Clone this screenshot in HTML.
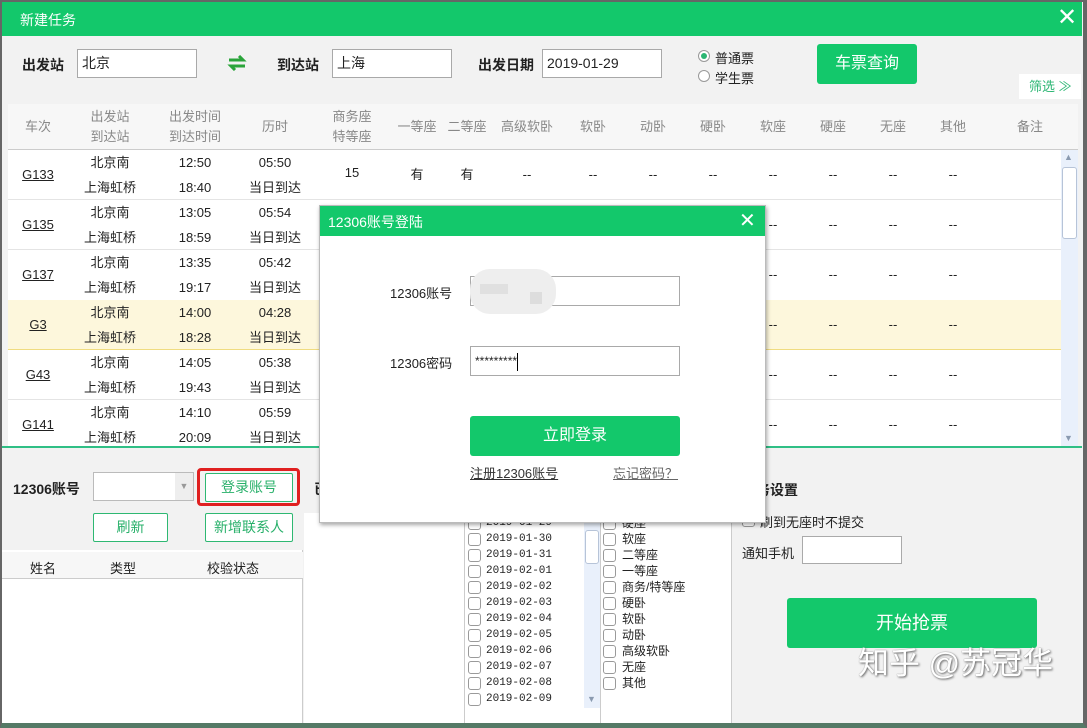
<!DOCTYPE html>
<html><head><meta charset="utf-8"><style>
*{margin:0;padding:0;box-sizing:border-box}
body{width:1087px;height:728px;overflow:hidden;background:#fff;font-family:"Liberation Sans","Noto Sans CJK SC",sans-serif;font-size:13px;color:#222;position:relative}
.a{position:absolute}
.g{background:#13c86b}
.inp{position:absolute;background:#fff;border:1px solid #a9a9a9;font-size:14px;padding-left:4px;line-height:26px}
.hd{position:absolute;color:#888;font-size:13px;text-align:center;line-height:20px}
.c{position:absolute;text-align:center;font-size:13px;line-height:25px}
.btn{position:absolute;border:1px solid #2eb872;background:#fff;color:#28b06a;text-align:center;font-size:14px;border-radius:2px}
.cb{position:absolute;width:13px;height:13px;border:1px solid #9a9a9a;border-radius:3px;background:#fff}
.lt{position:absolute;font-size:11px;line-height:16px;color:#222}
.dt{font-family:"Liberation Mono",monospace;font-size:11px}
</style></head><body>
<div class="a" style="left:0;top:0;width:1087px;height:728px;border:2px solid #666;border-right-width:4px;border-bottom:5px solid #557a66;background:#f2f2f2"></div>
<div class="a g" style="left:2px;top:2px;width:1080px;height:34px"></div>
<div class="a" style="left:20px;top:10px;color:#fff;font-size:14px">新建任务</div>
<div class="a" style="left:1057px;top:4px;color:#fff;font-size:24px;line-height:28px">✕</div>

<div class="a" style="left:22px;top:55px;font-weight:bold;font-size:14px">出发站</div>
<div class="inp" style="left:77px;top:49px;width:120px;height:29px">北京</div>
<svg class="a" style="left:227px;top:55px" width="20" height="16" viewBox="0 0 20 16"><path d="M2 5h14l-4-4M18 11H4l4 4" stroke="#2aa43a" stroke-width="3" fill="none"/></svg>
<div class="a" style="left:277px;top:55px;font-weight:bold;font-size:14px">到达站</div>
<div class="inp" style="left:332px;top:49px;width:120px;height:29px">上海</div>
<div class="a" style="left:478px;top:55px;font-weight:bold;font-size:14px">出发日期</div>
<div class="inp" style="left:542px;top:49px;width:120px;height:29px">2019-01-29</div>
<div class="a" style="left:698px;top:50px;width:12px;height:12px;border:1px solid #999;border-radius:50%;background:#fff"><div style="margin:2px;width:6px;height:6px;border-radius:50%;background:#2bb673"></div></div>
<div class="a" style="left:715px;top:48px;font-size:13px">普通票</div>
<div class="a" style="left:698px;top:70px;width:12px;height:12px;border:1px solid #999;border-radius:50%;background:#fff"></div>
<div class="a" style="left:715px;top:68px;font-size:13px">学生票</div>
<div class="a g" style="left:817px;top:44px;width:100px;height:40px;border-radius:3px;color:#fff;font-size:16px;text-align:center;line-height:40px">车票查询</div>
<div class="a" style="left:1019px;top:74px;width:62px;height:25px;background:#fff;color:#2bb673;font-size:13px;line-height:25px;padding-left:10px">筛选 ≫</div>

<div class="a" style="left:8px;top:104px;width:1070px;height:46px;background:#f7f7f7;border-bottom:1px solid #ccc"></div>
<div class="hd" style="left:8px;top:117px;width:60px">车次</div>
<div class="hd" style="left:80px;top:107px;width:60px">出发站<br>到达站</div>
<div class="hd" style="left:160px;top:107px;width:70px">出发时间<br>到达时间</div>
<div class="hd" style="left:245px;top:117px;width:60px">历时</div>
<div class="hd" style="left:322px;top:107px;width:60px">商务座<br>特等座</div>
<div class="hd" style="left:392px;top:117px;width:50px">一等座</div>
<div class="hd" style="left:442px;top:117px;width:50px">二等座</div>
<div class="hd" style="left:497px;top:117px;width:60px">高级软卧</div>
<div class="hd" style="left:563px;top:117px;width:60px">软卧</div>
<div class="hd" style="left:623px;top:117px;width:60px">动卧</div>
<div class="hd" style="left:683px;top:117px;width:60px">硬卧</div>
<div class="hd" style="left:743px;top:117px;width:60px">软座</div>
<div class="hd" style="left:803px;top:117px;width:60px">硬座</div>
<div class="hd" style="left:863px;top:117px;width:60px">无座</div>
<div class="hd" style="left:923px;top:117px;width:60px">其他</div>
<div class="hd" style="left:1000px;top:117px;width:60px">备注</div>

<div class="a" style="left:8px;top:150px;width:1053px;height:298px;background:#fff"></div>
<div class="a" style="left:8px;top:300px;width:1053px;height:50px;background:#fdf7dc;border-bottom:1px solid #f0dc80"></div>
<div class="a" style="left:8px;top:199px;width:1053px;height:1px;background:#e4e4e4"></div>
<div class="a" style="left:8px;top:249px;width:1053px;height:1px;background:#e4e4e4"></div>
<div class="a" style="left:8px;top:399px;width:1053px;height:1px;background:#e4e4e4"></div>
<div class="c" style="left:8px;top:162px;width:60px;text-decoration:underline">G133</div>
<div class="c" style="left:80px;top:150px;width:60px">北京南<br>上海虹桥</div>
<div class="c" style="left:160px;top:150px;width:70px">12:50<br>18:40</div>
<div class="c" style="left:245px;top:150px;width:60px">05:50<br>当日到达</div>
<div class="c" style="left:322px;top:160px;width:60px">15</div>
<div class="c" style="left:392px;top:162px;width:50px">有</div>
<div class="c" style="left:442px;top:162px;width:50px">有</div>
<div class="c" style="left:497px;top:162px;width:60px">--</div>
<div class="c" style="left:563px;top:162px;width:60px">--</div>
<div class="c" style="left:623px;top:162px;width:60px">--</div>
<div class="c" style="left:683px;top:162px;width:60px">--</div>
<div class="c" style="left:743px;top:162px;width:60px">--</div>
<div class="c" style="left:803px;top:162px;width:60px">--</div>
<div class="c" style="left:863px;top:162px;width:60px">--</div>
<div class="c" style="left:923px;top:162px;width:60px">--</div>

<div class="c" style="left:8px;top:212px;width:60px;text-decoration:underline">G135</div>
<div class="c" style="left:80px;top:200px;width:60px">北京南<br>上海虹桥</div>
<div class="c" style="left:160px;top:200px;width:70px">13:05<br>18:59</div>
<div class="c" style="left:245px;top:200px;width:60px">05:54<br>当日到达</div>
<div class="c" style="left:8px;top:262px;width:60px;text-decoration:underline">G137</div>
<div class="c" style="left:80px;top:250px;width:60px">北京南<br>上海虹桥</div>
<div class="c" style="left:160px;top:250px;width:70px">13:35<br>19:17</div>
<div class="c" style="left:245px;top:250px;width:60px">05:42<br>当日到达</div>
<div class="c" style="left:8px;top:312px;width:60px;text-decoration:underline">G3</div>
<div class="c" style="left:80px;top:300px;width:60px">北京南<br>上海虹桥</div>
<div class="c" style="left:160px;top:300px;width:70px">14:00<br>18:28</div>
<div class="c" style="left:245px;top:300px;width:60px">04:28<br>当日到达</div>
<div class="c" style="left:8px;top:362px;width:60px;text-decoration:underline">G43</div>
<div class="c" style="left:80px;top:350px;width:60px">北京南<br>上海虹桥</div>
<div class="c" style="left:160px;top:350px;width:70px">14:05<br>19:43</div>
<div class="c" style="left:245px;top:350px;width:60px">05:38<br>当日到达</div>
<div class="c" style="left:8px;top:412px;width:60px;text-decoration:underline">G141</div>
<div class="c" style="left:80px;top:400px;width:60px">北京南<br>上海虹桥</div>
<div class="c" style="left:160px;top:400px;width:70px">14:10<br>20:09</div>
<div class="c" style="left:245px;top:400px;width:60px">05:59<br>当日到达</div>
<div class="c" style="left:743px;top:212px;width:60px">--</div><div class="c" style="left:803px;top:212px;width:60px">--</div><div class="c" style="left:863px;top:212px;width:60px">--</div><div class="c" style="left:923px;top:212px;width:60px">--</div>
<div class="c" style="left:743px;top:262px;width:60px">--</div><div class="c" style="left:803px;top:262px;width:60px">--</div><div class="c" style="left:863px;top:262px;width:60px">--</div><div class="c" style="left:923px;top:262px;width:60px">--</div>
<div class="c" style="left:743px;top:312px;width:60px">--</div><div class="c" style="left:803px;top:312px;width:60px">--</div><div class="c" style="left:863px;top:312px;width:60px">--</div><div class="c" style="left:923px;top:312px;width:60px">--</div>
<div class="c" style="left:743px;top:362px;width:60px">--</div><div class="c" style="left:803px;top:362px;width:60px">--</div><div class="c" style="left:863px;top:362px;width:60px">--</div><div class="c" style="left:923px;top:362px;width:60px">--</div>
<div class="c" style="left:743px;top:412px;width:60px">--</div><div class="c" style="left:803px;top:412px;width:60px">--</div><div class="c" style="left:863px;top:412px;width:60px">--</div><div class="c" style="left:923px;top:412px;width:60px">--</div>
<div class="a" style="left:1061px;top:150px;width:17px;height:297px;background:#e9f0fb"></div>
<div class="a" style="left:1062px;top:167px;width:15px;height:72px;background:#fff;border:1px solid #b7c4d8;border-radius:3px"></div>
<div class="a" style="left:1064px;top:152px;color:#8a9ab0;font-size:9px">▲</div>
<div class="a" style="left:1064px;top:433px;color:#8a9ab0;font-size:9px">▼</div>
<div class="a" style="left:2px;top:446px;width:1080px;height:2px;background:#2fbf85"></div>

<div class="a" style="left:2px;top:550px;width:301px;height:173px;background:#fff;border-right:1px solid #ccc"></div>
<div class="a" style="left:2px;top:552px;width:301px;height:27px;background:#f7f7f7;border-bottom:1px solid #ccc"></div>
<div class="a" style="left:30px;top:558px">姓名</div>
<div class="a" style="left:110px;top:558px">类型</div>
<div class="a" style="left:207px;top:558px">校验状态</div>
<div class="a" style="left:13px;top:479px;font-weight:bold;font-size:14px">12306账号</div>
<div class="a" style="left:93px;top:472px;width:101px;height:29px;background:#fff;border:1px solid #bbb"></div>
<div class="a" style="left:175px;top:473px;width:18px;height:27px;background:#eee;color:#999;font-size:9px;text-align:center;line-height:27px">▼</div>
<div class="a" style="left:197px;top:468px;width:103px;height:38px;border:3px solid #e02020;border-radius:4px"></div>
<div class="btn" style="left:205px;top:473px;width:88px;height:29px;line-height:27px">登录账号</div>
<div class="btn" style="left:93px;top:513px;width:75px;height:29px;line-height:27px">刷新</div>
<div class="btn" style="left:205px;top:513px;width:88px;height:29px;line-height:27px">新增联系人</div>

<div class="a" style="left:304px;top:513px;width:428px;height:210px;background:#fff"></div>
<div class="a" style="left:464px;top:513px;width:1px;height:210px;background:#ccc"></div>
<div class="a" style="left:600px;top:513px;width:1px;height:210px;background:#ccc"></div>
<div class="a" style="left:731px;top:448px;width:1px;height:275px;background:#ccc"></div>
<div class="a" style="left:584px;top:515px;width:16px;height:193px;background:#e9f0fb"></div>
<div class="a" style="left:585px;top:530px;width:14px;height:34px;background:#fff;border:1px solid #b7c4d8;border-radius:3px"></div>
<div class="a" style="left:587px;top:694px;color:#8a9ab0;font-size:9px">▼</div>
<div class="cb" style="left:468px;top:517px"></div><div class="lt dt" style="left:486px;top:515px">2019-01-29</div>
<div class="cb" style="left:468px;top:533px"></div><div class="lt dt" style="left:486px;top:531px">2019-01-30</div>
<div class="cb" style="left:468px;top:549px"></div><div class="lt dt" style="left:486px;top:547px">2019-01-31</div>
<div class="cb" style="left:468px;top:565px"></div><div class="lt dt" style="left:486px;top:563px">2019-02-01</div>
<div class="cb" style="left:468px;top:581px"></div><div class="lt dt" style="left:486px;top:579px">2019-02-02</div>
<div class="cb" style="left:468px;top:597px"></div><div class="lt dt" style="left:486px;top:595px">2019-02-03</div>
<div class="cb" style="left:468px;top:613px"></div><div class="lt dt" style="left:486px;top:611px">2019-02-04</div>
<div class="cb" style="left:468px;top:629px"></div><div class="lt dt" style="left:486px;top:627px">2019-02-05</div>
<div class="cb" style="left:468px;top:645px"></div><div class="lt dt" style="left:486px;top:643px">2019-02-06</div>
<div class="cb" style="left:468px;top:661px"></div><div class="lt dt" style="left:486px;top:659px">2019-02-07</div>
<div class="cb" style="left:468px;top:677px"></div><div class="lt dt" style="left:486px;top:675px">2019-02-08</div>
<div class="cb" style="left:468px;top:693px"></div><div class="lt dt" style="left:486px;top:691px">2019-02-09</div>
<div class="cb" style="left:603px;top:517px"></div><div class="lt" style="left:622px;top:515px;font-size:12px">硬座</div>
<div class="cb" style="left:603px;top:533px"></div><div class="lt" style="left:622px;top:531px;font-size:12px">软座</div>
<div class="cb" style="left:603px;top:549px"></div><div class="lt" style="left:622px;top:547px;font-size:12px">二等座</div>
<div class="cb" style="left:603px;top:565px"></div><div class="lt" style="left:622px;top:563px;font-size:12px">一等座</div>
<div class="cb" style="left:603px;top:581px"></div><div class="lt" style="left:622px;top:579px;font-size:12px">商务/特等座</div>
<div class="cb" style="left:603px;top:597px"></div><div class="lt" style="left:622px;top:595px;font-size:12px">硬卧</div>
<div class="cb" style="left:603px;top:613px"></div><div class="lt" style="left:622px;top:611px;font-size:12px">软卧</div>
<div class="cb" style="left:603px;top:629px"></div><div class="lt" style="left:622px;top:627px;font-size:12px">动卧</div>
<div class="cb" style="left:603px;top:645px"></div><div class="lt" style="left:622px;top:643px;font-size:12px">高级软卧</div>
<div class="cb" style="left:603px;top:661px"></div><div class="lt" style="left:622px;top:659px;font-size:12px">无座</div>
<div class="cb" style="left:603px;top:677px"></div><div class="lt" style="left:622px;top:675px;font-size:12px">其他</div>
<div class="a" style="left:314px;top:479px;font-weight:bold;font-size:14px">已</div>

<div class="a" style="left:742px;top:480px;font-weight:bold;font-size:14px">任务设置</div>
<div class="cb" style="left:742px;top:514px"></div>
<div class="a" style="left:760px;top:512px">刷到无座时不提交</div>
<div class="a" style="left:742px;top:543px">通知手机</div>
<div class="a" style="left:802px;top:536px;width:100px;height:28px;background:#fff;border:1px solid #aaa"></div>
<div class="a g" style="left:787px;top:598px;width:250px;height:50px;border-radius:3px;color:#fff;font-size:18px;text-align:center;line-height:50px">开始抢票</div>
<div class="a" style="left:858px;top:638px;color:#fff;font-size:31px;text-shadow:1px 1px 2px #666,0 0 1px #888">知乎 @苏冠华</div>

<div class="a" style="left:319px;top:205px;width:447px;height:318px;background:#fff;border:1px solid #bbb;box-shadow:1px 2px 4px rgba(0,0,0,.35)"></div>
<div class="a g" style="left:320px;top:206px;width:445px;height:30px"></div>
<div class="a" style="left:328px;top:212px;color:#fff;font-size:14px">12306账号登陆</div>
<div class="a" style="left:739px;top:207px;color:#fff;font-size:20px;line-height:28px">✕</div>
<div class="a" style="left:390px;top:283px;font-size:13px">12306账号</div>
<div class="inp" style="left:470px;top:276px;width:210px;height:30px"></div>
<div class="a" style="left:470px;top:269px;width:86px;height:45px;background:#eee;border-radius:20px"></div>
<div class="a" style="left:480px;top:284px;width:28px;height:10px;background:#e0e0e0"></div>
<div class="a" style="left:530px;top:292px;width:12px;height:12px;background:#ddd"></div>
<div class="a" style="left:390px;top:353px;font-size:13px">12306密码</div>
<div class="inp" style="left:470px;top:346px;width:210px;height:30px;font-size:12px;line-height:28px">*********<span style="display:inline-block;width:1px;height:18px;background:#000;vertical-align:middle"></span></div>
<div class="a g" style="left:470px;top:416px;width:210px;height:40px;border-radius:3px;color:#fff;font-size:16px;text-align:center;line-height:40px">立即登录</div>
<div class="a" style="left:470px;top:463px;text-decoration:underline;font-size:13px;color:#333">注册12306账号</div>
<div class="a" style="left:613px;top:463px;text-decoration:underline;font-size:13px;color:#666">忘记密码？</div>
</body></html>
